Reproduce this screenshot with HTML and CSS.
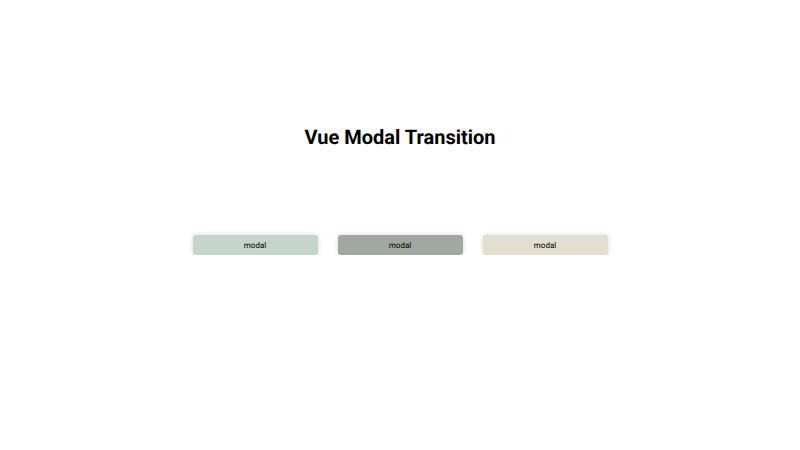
FILE: index.html
```html
<!DOCTYPE html>
<html lang="en">
<head>
<meta charset="utf-8">
<title>Vue Modal Transition</title>
<link rel="stylesheet" href="styles.css">
</head>
<body>
<main class="page">
  <h1 class="title">Vue Modal Transition</h1>
  <div class="buttons">
    <button class="button button-mint" type="button">modal</button>
    <button class="button button-sage" type="button">modal</button>
    <button class="button button-sand" type="button">modal</button>
  </div>
</main>
</body>
</html>
```
FILE: styles.css
```css
body {
  margin: 0;
  background: #fff;
  color: #000;
  font-family: Roboto, sans-serif;
  text-rendering: geometricPrecision;
}

.page {
  display: flex;
  flex-direction: column;
  align-items: center;
  gap: 85px;
  padding: 125px 20px 0;
}

.title {
  margin: 0;
  font-size: 20px;
  line-height: 25px;
  font-weight: 700;
}

.buttons {
  display: flex;
  justify-content: center;
  gap: 20px;
}

.button {
  width: 125px;
  height: 20px;
  padding: 2px 0 0;
  border: 0;
  border-radius: 3px;
  box-shadow: 0 0 5px rgba(0, 0, 0, 0.16);
  color: #000;
  font-family: inherit;
  font-size: 8px;
  line-height: 18px;
  text-rendering: inherit;
  cursor: pointer;
}

.button-mint {
  background: #c6d5cb;
}

.button-sage {
  background: #a1a8a2;
}

.button-sand {
  background: #e2dfce;
}
```
